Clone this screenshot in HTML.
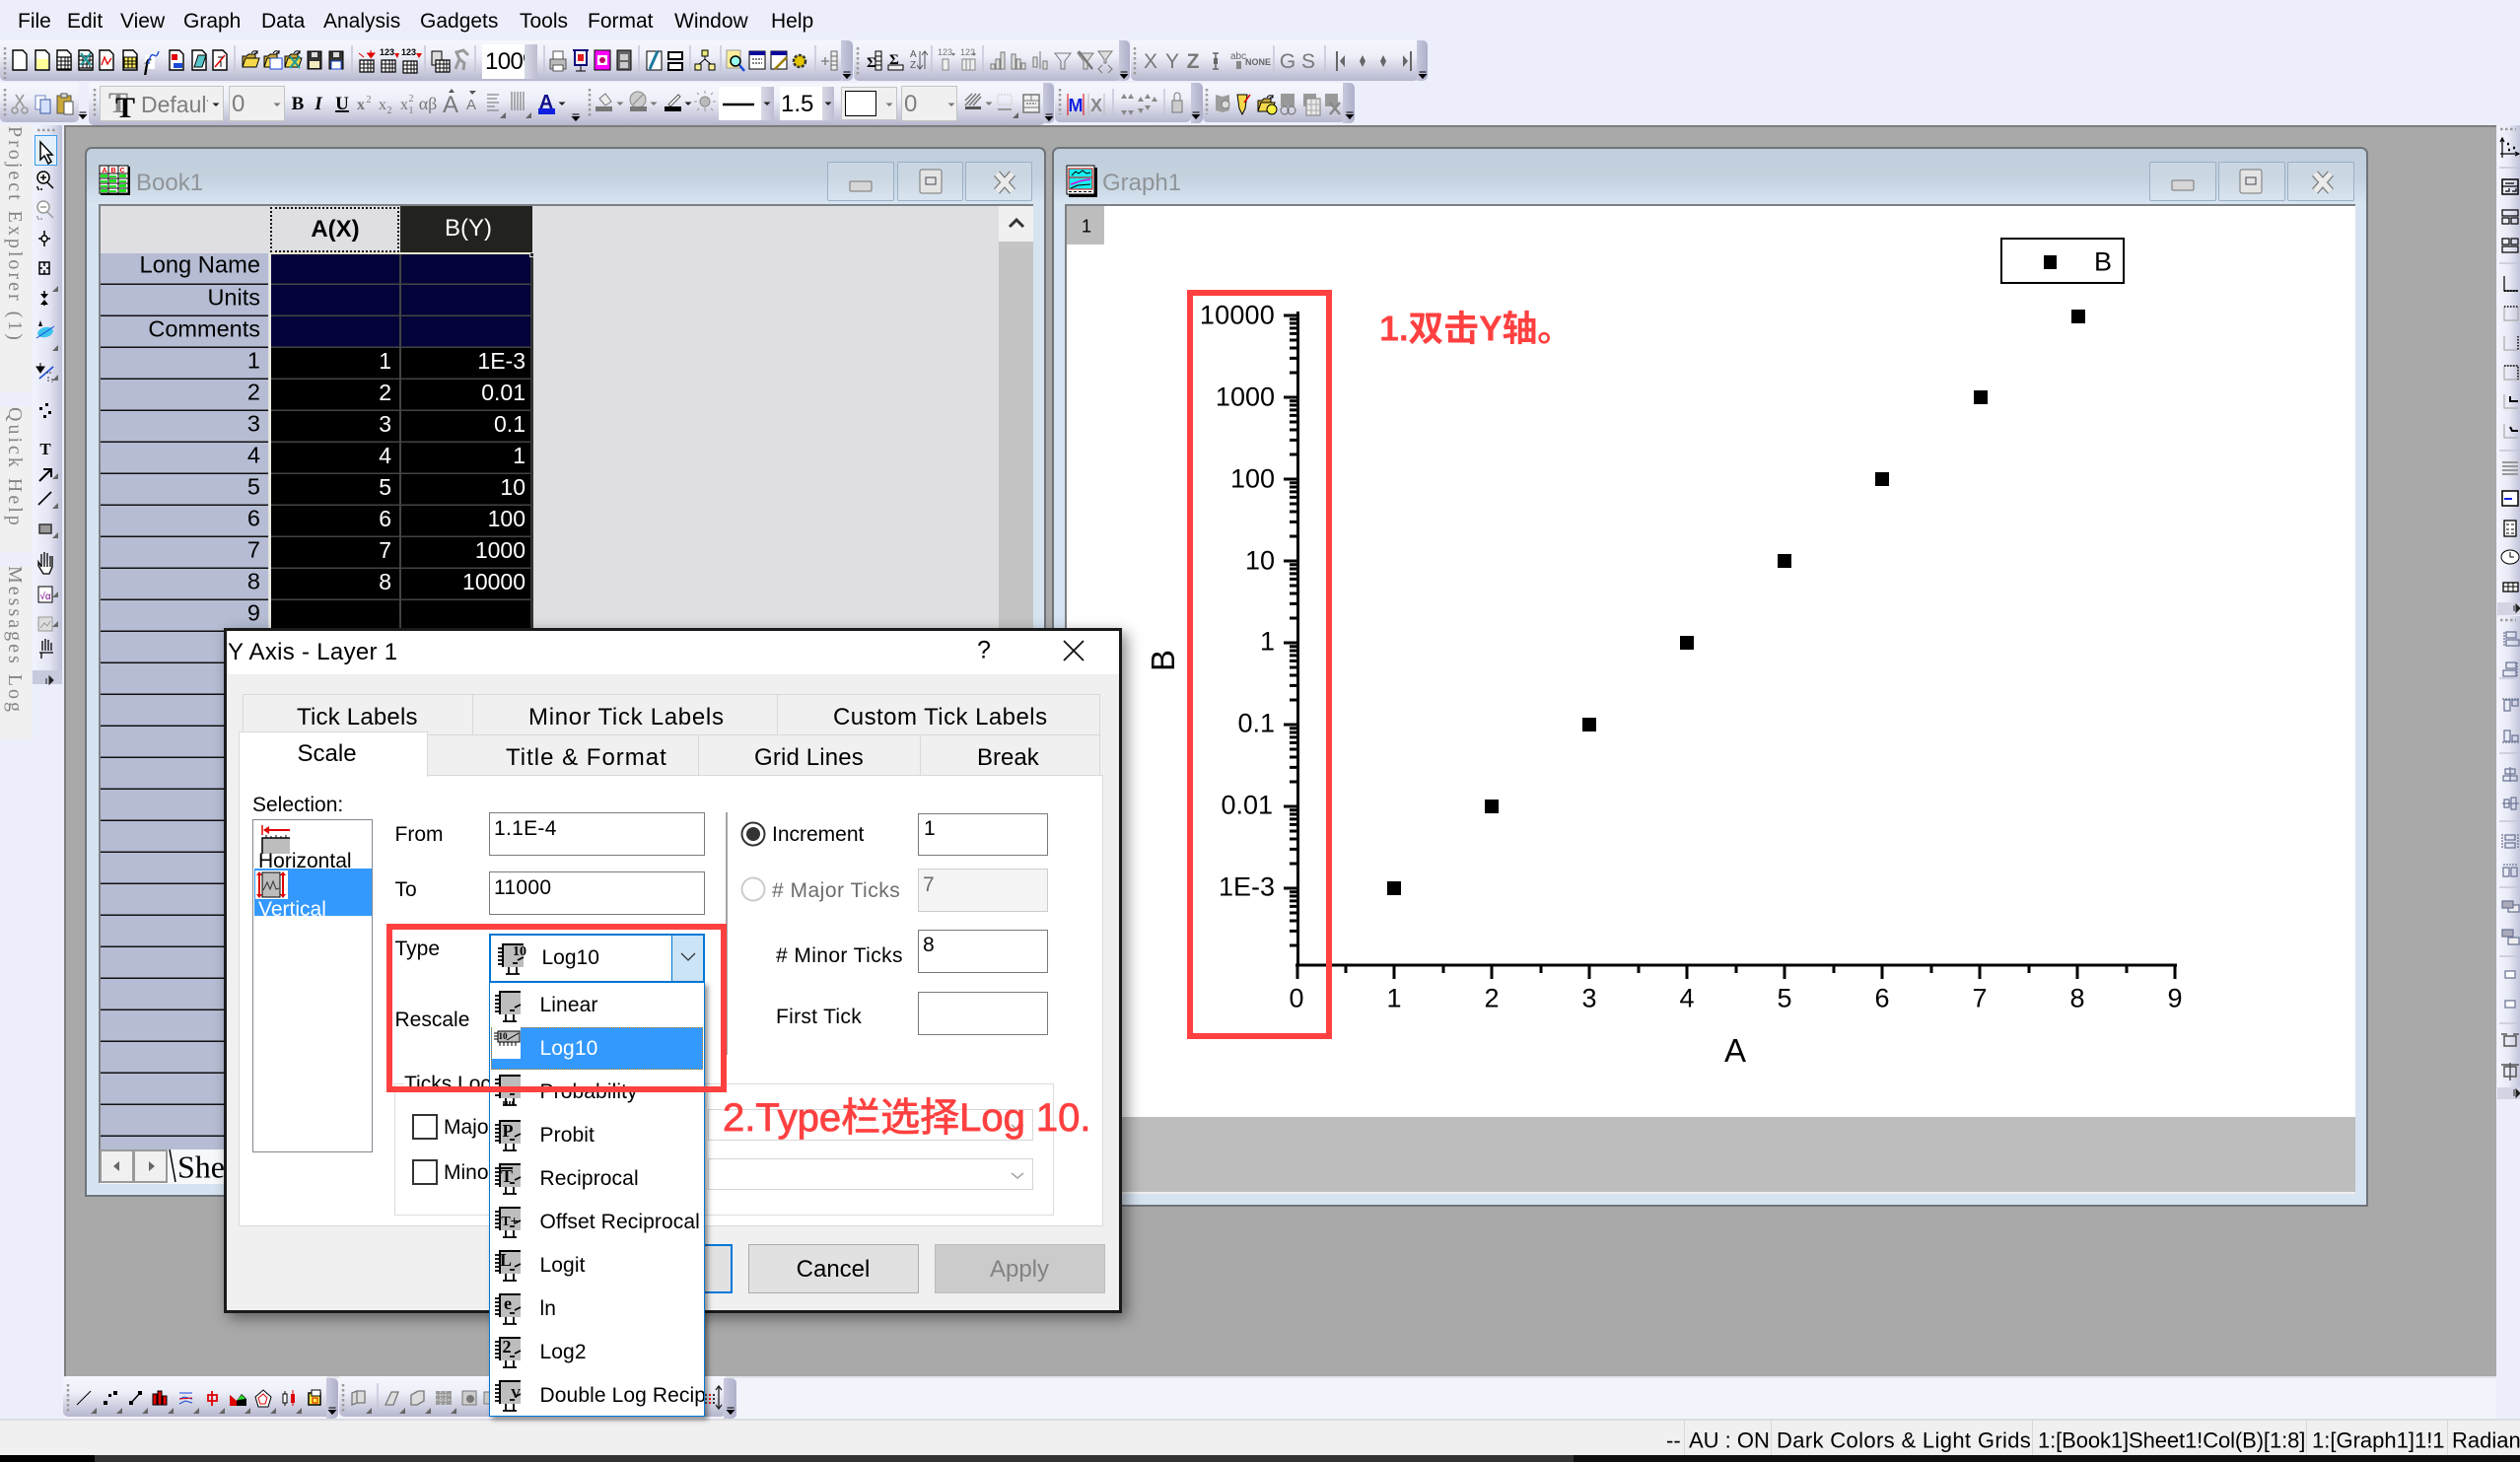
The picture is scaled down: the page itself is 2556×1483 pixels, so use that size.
<!DOCTYPE html>
<html><head><meta charset="utf-8"><title>Y Axis - Layer 1</title>
<style>
html,body{margin:0;padding:0;background:#eceffb}
body{position:relative;width:2556px;height:1483px;overflow:hidden;font-family:"Liberation Sans","Noto Sans CJK SC",sans-serif;color:#000}
div,span{box-sizing:border-box}
.a{position:absolute}
.t{position:absolute;white-space:nowrap;transform:translateY(-50%);line-height:1.15}
.r{position:absolute;white-space:nowrap;transform:translate(-100%,-50%);line-height:1.15}
.c{position:absolute;white-space:nowrap;transform:translate(-50%,-50%);line-height:1.15}
.tb{position:absolute;background:linear-gradient(#f6f7fd 0,#eef0f9 38%,#b6b7ce 100%);border-radius:0 0 5px 5px}
.end{position:absolute;background:linear-gradient(90deg,#c8c9dd,#aeafca);border-radius:0 5px 5px 0}
.win{position:absolute;background:linear-gradient(#c1cfdd 0,#c4d2df 30px,#d8e5f2 58px,#d6e3f1 58px);border:2px solid #6f7479;border-bottom-width:2px;border-radius:7px 7px 0 0}
.wb{position:absolute;top:164px;height:40px;border:1.5px solid #9db0c6;border-radius:2px;background:rgba(255,255,255,.12)}
.tab{position:absolute;background:#f0f0f0;border:1.5px solid #d9d9d9}
.inp{position:absolute;background:#fff;border:1.5px solid #7a7a7a}
.d{font-size:21px}
.it{position:absolute;left:50.500px;font-size:21px;white-space:nowrap;transform:translateY(-50%);letter-spacing:.1px;line-height:1.15}
.vt{position:absolute;left:3px;font:20px 'Liberation Serif',serif;letter-spacing:3px;color:#858585;writing-mode:vertical-rl;white-space:nowrap}
</style></head>
<body>

<!-- chrome backgrounds -->
<div class="a" style="left:0;top:0;width:2556px;height:41px;background:#eceffb"></div>
<div class="t" style="left:18px;top:22px;font-size:21px">File</div>
<div class="t" style="left:68px;top:22px;font-size:21px">Edit</div>
<div class="t" style="left:122px;top:22px;font-size:21px">View</div>
<div class="t" style="left:186px;top:22px;font-size:21px">Graph</div>
<div class="t" style="left:265px;top:22px;font-size:21px">Data</div>
<div class="t" style="left:328px;top:22px;font-size:21px">Analysis</div>
<div class="t" style="left:426px;top:22px;font-size:21px">Gadgets</div>
<div class="t" style="left:527px;top:22px;font-size:21px">Tools</div>
<div class="t" style="left:596px;top:22px;font-size:21px">Format</div>
<div class="t" style="left:684px;top:22px;font-size:21px">Window</div>
<div class="t" style="left:782px;top:22px;font-size:21px">Help</div>

<!-- toolbars row 1 -->
<div class="tb" style="left:0;top:41px;width:856px;height:41px"></div><div class="end" style="left:853px;top:41px;width:12px;height:41px"></div>
<div class="tb" style="left:866px;top:41px;width:272px;height:41px"></div><div class="end" style="left:1135px;top:41px;width:11px;height:41px"></div>
<div class="tb" style="left:1147px;top:41px;width:292px;height:41px"></div><div class="end" style="left:1437px;top:41px;width:11px;height:41px"></div>
<!-- toolbars row 2 -->
<div class="tb" style="left:0;top:84px;width:80px;height:40px"></div>
<div class="tb" style="left:90px;top:84px;width:970px;height:43px"></div>
<div class="end" style="left:1058px;top:84px;width:11px;height:41px"></div>
<div class="tb" style="left:1070px;top:84px;width:138px;height:40px"></div><div class="end" style="left:1208px;top:84px;width:12px;height:41px"></div>
<div class="tb" style="left:1220px;top:84px;width:144px;height:40px"></div><div class="end" style="left:1362px;top:84px;width:12px;height:41px"></div>

<!-- combos -->
<div class="a" style="left:489px;top:45px;width:56px;height:35px;background:#fff;overflow:hidden"><div class="t" style="left:3px;top:18px;font-size:24px;letter-spacing:-.6px">100%</div><div class="a" style="left:43px;top:0;width:13px;height:35px;background:linear-gradient(90deg,#d8d9e6,#bcbdd2)"></div></div>
<div class="a" style="left:101px;top:87px;width:126px;height:36px;background:#f0f0f0;border:1.5px solid #c4c4c4"></div>
<div class="a" style="left:138px;top:90px;width:73px;height:30px;overflow:hidden"><div class="t" style="left:5px;top:16px;font-size:23px;color:#7e7e7e">Default</div></div>
<div class="a" style="left:232px;top:87px;width:57px;height:36px;background:#f0f0f0;border:1.5px solid #c4c4c4"></div>
<div class="t" style="left:235px;top:106px;font-size:24px;color:#7e7e7e">0</div>
<div class="a" style="left:729px;top:88px;width:56px;height:34px;background:#fff"><div class="a" style="left:43px;top:0;width:13px;height:34px;background:linear-gradient(90deg,#d8d9e6,#bcbdd2)"></div></div>
<div class="a" style="left:791px;top:88px;width:55px;height:34px;background:#fff"><div class="a" style="left:43px;top:0;width:12px;height:34px;background:linear-gradient(90deg,#d8d9e6,#bcbdd2)"></div></div>
<div class="t" style="left:792px;top:106px;font-size:24px">1.5</div>
<div class="a" style="left:853px;top:88px;width:57px;height:34px;background:#f0f0f0;border:1.5px solid #c4c4c4"></div>
<div class="a" style="left:857px;top:92px;width:32px;height:26px;background:#fff;border:1.5px solid #000"></div>
<div class="a" style="left:914px;top:87px;width:57px;height:36px;background:#f0f0f0;border:1.5px solid #c4c4c4"></div>
<div class="t" style="left:917px;top:106px;font-size:24px;color:#7e7e7e">0</div>

<!-- left panel -->
<div class="a" style="left:0;top:127px;width:32px;height:271px;background:#f0f0f0"></div>
<div class="a" style="left:0;top:413px;width:32px;height:147px;background:#f0f0f0"></div>
<div class="a" style="left:0;top:575px;width:32px;height:175px;background:#f0f0f0"></div>
<div class="vt" style="top:128px">Project Explorer (1)</div>
<div class="vt" style="top:413px">Quick Help</div>
<div class="vt" style="top:574px">Messages Log</div>
<div class="a" style="left:33px;top:127px;width:30px;height:565px;background:linear-gradient(90deg,#f1f3fc,#e4e6f4 55%,#bfc1d8)"></div>
<div class="a" style="left:33px;top:680px;width:30px;height:14px;background:#c7c9dc"></div>
<div class="a" style="left:35px;top:137px;width:23px;height:31px;background:#e3f0fb;border:1.5px solid #3c9fe8"></div>

<!-- MDI area -->
<div class="a" style="left:65px;top:127px;width:2467px;height:1269px;background:#a9a9a9;border-left:2px solid #7d7d7d;border-top:2px solid #7d7d7d"></div>

<!-- right toolbar -->
<div class="a" style="left:2533px;top:127px;width:23px;height:484px;background:linear-gradient(90deg,#f4f5fd,#e8eaf6 50%,#c3c5da)"></div>
<div class="a" style="left:2533px;top:611px;width:23px;height:13px;background:#d3d4e4"></div>
<div class="a" style="left:2533px;top:625px;width:23px;height:478px;background:linear-gradient(90deg,#f4f5fd,#e8eaf6 50%,#c3c5da)"></div>
<div class="a" style="left:2533px;top:1103px;width:23px;height:12px;background:#d3d4e4"></div>

<!-- bottom bars -->
<div class="a" style="left:65px;top:1396px;width:2467px;height:44px;background:#f2f4fc;border-top:2px solid #e2e3e8"></div>
<div class="a" style="left:2532px;top:1115px;width:24px;height:325px;background:#eceffb"></div>
<div class="a" style="left:0;top:1439px;width:2556px;height:37px;background:#f0f0f0;border-top:2px solid #dcdce2"></div>
<div class="a" style="left:0;top:1476px;width:96px;height:7px;background:#000"></div>
<div class="a" style="left:96px;top:1476px;width:1500px;height:7px;background:#333"></div>
<div class="a" style="left:1596px;top:1476px;width:960px;height:7px;background:#0f0f0f"></div>
<div class="t" style="left:1690px;top:1461px;font-size:22px">--</div>
<div class="t" style="left:1713px;top:1461px;font-size:22px">AU : ON</div>
<div class="t" style="left:1802px;top:1461px;font-size:22px;letter-spacing:.35px">Dark Colors &amp; Light Grids</div>
<div class="t" style="left:2067px;top:1461px;font-size:22px;letter-spacing:-.1px">1:[Book1]Sheet1!Col(B)[1:8]</div>
<div class="t" style="left:2345px;top:1461px;font-size:22px">1:[Graph1]1!1</div>
<div class="t" style="left:2487px;top:1461px;font-size:22px">Radians</div>
<div class="a" style="left:1708px;top:1441px;width:1px;height:35px;background:#d8d8d8"></div>
<div class="a" style="left:1796px;top:1441px;width:1px;height:35px;background:#d8d8d8"></div>
<div class="a" style="left:2061px;top:1441px;width:1px;height:35px;background:#d8d8d8"></div>
<div class="a" style="left:2339px;top:1441px;width:1px;height:35px;background:#d8d8d8"></div>
<div class="a" style="left:2482px;top:1441px;width:1px;height:35px;background:#d8d8d8"></div>
<div class="tb" style="left:64px;top:1396px;width:268px;height:41px;border-radius:4px 0 0 5px"></div><div class="end" style="left:331px;top:1398px;width:12px;height:41px"></div>
<div class="tb" style="left:344px;top:1396px;width:392px;height:41px"></div><div class="end" style="left:734px;top:1398px;width:13px;height:41px"></div>

<!-- toolbar icons -->
<svg class="a" style="left:0;top:0" width="2556" height="1483" viewBox="0 0 2556 1483" font-family="Liberation Sans,sans-serif">
<defs>
<path id="d" d="M-7-10H3L7-6V10H-7Z" fill="#fff" stroke="#000" stroke-width="1.4"/>
<g id="gr"><path d="M-7-5H7V7H-7Z" fill="#fff" stroke="#000" stroke-width="1.2"/><path d="M-7-1H7M-7 3H7M-3-5V7M1-5V7M4-5V7" stroke="#000"/></g>
<g id="ch"><path d="M-3.500-3H3.500M-3.500-.5H3.500L0 3.500Z" fill="#000" stroke="#000" stroke-width=".9"/></g>
<path id="dn" d="M-3.500-1.500H3.500L0 2Z" fill="#222"/>
<path id="dg" d="M-3.500-1.500H3.500L0 2Z" fill="#777"/>
<path id="cor" d="M-3 3H3V-3Z" fill="#666"/>
<g id="fo"><path d="M-8 8V-3H-4L-2-5H5V-1" fill="#c9a73a" stroke="#000"/><path d="M-8 8L-5-1H9L6 8Z" fill="#f5d94a" stroke="#000"/><path d="M1-6C3-9 6-9 7-6M7-9V-6H4" fill="none" stroke="#000"/></g>
<g id="fl"><path d="M-7-9H7V9H-7Z" fill="#333" stroke="#000"/><path d="M-3-8H3V-3H-3Z" fill="#ddd"/><path d="M-5 1H5V8H-5Z" fill="#f2ecc0"/></g>
<g id="ga"><path d="M-7-9H7V8H-7Z" fill="#e8e8e8" stroke="#8d8d8d" stroke-width="1.2"/><path d="M-7-3H7M-7 3H7M-2-9V8M3-9V8" stroke="#aaa"/></g>
<g id="bar"><path d="M-8 8H-4V3H-8ZM-3 8H1V-1H-3ZM2 8H6V-6H2Z" fill="#ddd" stroke="#555"/></g>
<g id="dta"><path d="M-7-9L7 0L-7 9Z" fill="none"/></g>
</defs>

<!-- grips -->
<g stroke="#9b9b9b" stroke-width="2.500" stroke-dasharray="2.500 2.500">
<path d="M5 48V80M5 90V118M96 90V118M598 90V118M870 48V76M1151 48V76M1075 90V116M1224 90V116M69 1404V1432M348 1404V1432M38 132H58M2536 131H2552M2536 629H2552"/>
</g>
<!-- separators -->
<path d="M238 46V78M357 46V78M431 46V78M482 46V78M552 46V78M648 46V78M700 46V78M731 46V78M827 46V78M945 46V78M997 46V78M1292 46V78M1344 46V78M1129 90V120M1181 90V120M383 1403V1433M2535 170H2555M2535 267H2555M2535 457H2555M2535 688H2555M2535 764H2555M2535 833H2555M2535 900H2555M2535 970H2555M2535 1038H2555" stroke="#c5c6d8" stroke-width="1.500"/>

<!-- chevrons -->
<use href="#ch" x="859" y="76"/><use href="#ch" x="1140" y="76"/><use href="#ch" x="1443" y="76"/>
<use href="#ch" x="84" y="117"/><use href="#ch" x="584" y="119"/><use href="#ch" x="1064" y="119"/><use href="#ch" x="1213" y="117"/><use href="#ch" x="1369" y="117"/><use href="#ch" x="337" y="1431"/><use href="#ch" x="741" y="1431"/>
<path d="M47 688V694M50 686L54 690L50 694Z" fill="#222" stroke="#222"/>
<path d="M2550 614V620M2552 613L2556 617L2552 621Z" fill="#222" stroke="#222"/><path d="M2550 1105V1112M2552 1105L2556 1109L2552 1113Z" fill="#222" stroke="#222"/>

<!-- row 1 group 1 -->
<use href="#d" x="20" y="61"/>
<use href="#d" x="43" y="61"/><rect x="37" y="60" width="12" height="10" fill="#ffff99"/>
<use href="#d" x="65" y="61"/><use href="#gr" x="65" y="63"/>
<use href="#d" x="87" y="61"/><use href="#gr" x="87" y="62"/><path d="M82 54L92 66M92 54L82 66" stroke="#1c9a9a" stroke-width="2"/>
<use href="#d" x="108" y="61"/><path d="M103 66L106 58L109 65L113 59" stroke="#e00000" fill="none" stroke-width="1.300"/>
<use href="#d" x="132" y="61"/><rect x="126" y="58" width="12" height="11" fill="#ffef60" stroke="#000"/><path d="M126 62H138M126 65H138M130 58V69M134 58V69" stroke="#000"/>
<path d="M147 56H157V70H147Z" fill="#fff"/><text x="146" y="72" font-family="Liberation Serif" font-style="italic" font-weight="bold" font-size="18">f</text><path d="M150 65C155 45 157 65 161 52" stroke="#2a53d8" fill="none" stroke-width="1.500"/>
<use href="#d" x="179" y="61"/><rect x="174" y="55" width="6" height="6" fill="#e00000"/><rect x="176" y="64" width="9" height="5" fill="#1a49d8"/>
<use href="#d" x="202" y="61"/><path d="M197 68L201 56H209L205 68Z" fill="#57c4c9" stroke="#000"/>
<use href="#d" x="223" y="61"/><path d="M218 68L228 56" stroke="#e00000" stroke-width="1.500"/><path d="M221 58H226M224 62V68" stroke="#000"/>
<use href="#fo" x="254" y="60"/><use href="#fo" x="276" y="60"/><rect x="274" y="59" width="12" height="11" fill="#fff" stroke="#1a49d8"/>
<use href="#fo" x="297" y="60"/><path d="M294 57L304 69M304 57L294 69" stroke="#1c9a9a" stroke-width="2"/>
<use href="#fl" x="319" y="61"/><use href="#fl" x="341" y="61"/><path d="M336 62H346V70H336Z" fill="#fff" stroke="#1a49d8"/>
<use href="#gr" x="372" y="66"/><path d="M364 54L369 58M376 51V57M372 54H380L376 59" fill="#e00000" stroke="#e00000"/>
<use href="#gr" x="394" y="66"/><text x="385" y="56" font-size="9" font-weight="bold">123</text><path d="M400 54H405L403 59Z" fill="#e00000"/>
<use href="#gr" x="416" y="67"/><text x="407" y="56" font-size="9" font-weight="bold">123</text><path d="M422 54H428L425 59Z" fill="#e00000"/>
<path d="M438 52H448V66H438Z" fill="#ddd" stroke="#000"/><use href="#gr" x="449" y="66"/>
<path d="M462 70L466 60L463 53L470 51L475 56M466 60L471 64L470 71" stroke="#999" stroke-width="3" fill="none"/>
<path d="M558 60H574V70H558Z" fill="#bbb" stroke="#555"/><path d="M561 52H571V60H561ZM561 66H571V72H561Z" fill="#fff" stroke="#555"/>
<path d="M581 51H597M583 52V66H595V52" fill="#fff" stroke="#0a0a7a" stroke-width="2"/><path d="M586 55H592V62H586Z" fill="#e02020"/><path d="M589 66V72M584 72H594" stroke="#000"/>
<rect x="603" y="51" width="16" height="20" fill="#f0f" stroke="#000"/><rect x="606" y="56" width="10" height="10" fill="#fff"/><circle cx="611" cy="61" r="3" fill="#c0006a"/>
<rect x="626" y="51" width="14" height="20" fill="#666" stroke="#000"/><path d="M629 55H637V61H629ZM629 63H637V69H629Z" fill="#ccc"/>
<rect x="656" y="52" width="15" height="19" fill="#fff" stroke="#000"/><path d="M659 70L667 52" stroke="#1c7ba0" stroke-width="3"/>
<path d="M678 53H692V60H678ZM678 64H692V71H678Z" fill="#fff" stroke="#000" stroke-width="2"/>
<path d="M715 53V60M715 60L708 66M715 60L722 66" stroke="#000"/><rect x="712" y="51" width="6" height="6" fill="#e6e67a" stroke="#000"/><rect x="705" y="65" width="6" height="6" fill="#f7f19a" stroke="#000"/><rect x="719" y="65" width="6" height="6" fill="#f7f19a" stroke="#000"/>
<rect x="737" y="51" width="14" height="18" fill="#ffef9a" stroke="#999"/><circle cx="746" cy="62" r="5" fill="#9fe" stroke="#000" stroke-width="1.500"/><path d="M750 66L755 72" stroke="#1a49d8" stroke-width="2.500"/>
<rect x="760" y="52" width="16" height="18" fill="#fff" stroke="#000"/><rect x="760" y="52" width="16" height="4" fill="#0a0a9a"/><path d="M763 60H773M763 64H773" stroke="#000" stroke-dasharray="2 1"/>
<rect x="782" y="52" width="16" height="18" fill="#fff" stroke="#000"/><rect x="782" y="52" width="16" height="4" fill="#0a0a9a"/><path d="M786 70L798 58" stroke="#9a7f00" stroke-width="2.500"/>
<circle cx="811" cy="62" r="6" fill="#e2c400" stroke="#333" stroke-width="2.500" stroke-dasharray="3 1.500"/>
<path d="M833 62H841M837 58V66" stroke="#888" stroke-width="1.600"/><rect x="843" y="52" width="6" height="19" fill="#eee" stroke="#666"/><path d="M843 57H849M843 62H849M843 66H849" stroke="#666"/>

<!-- row 1 group 2 -->
<text x="879" y="68" font-family="Liberation Serif" font-size="15" font-weight="bold">Σ</text><rect x="888" y="52" width="6" height="19" fill="#eee" stroke="#000"/><path d="M888 57H894M888 62H894M888 66H894" stroke="#000"/>
<text x="902" y="65" font-family="Liberation Serif" font-size="15" font-weight="bold">Σ</text><rect x="901" y="66" width="15" height="5" fill="#eee" stroke="#000"/>
<text x="923" y="58" font-size="10" fill="#555">A</text><text x="923" y="69" font-size="10" fill="#555">Z</text><path d="M933 52V70M930 66L933 70L936 66M938 70V52M935 56L938 52L941 56" stroke="#555" fill="none"/>
<text x="951" y="56" font-size="9" fill="#777">123</text><rect x="956" y="60" width="6" height="11" fill="#eee" stroke="#888"/><path d="M965 54H969L967 57Z" fill="#777"/>
<text x="974" y="56" font-size="9" fill="#777">123</text><rect x="976" y="60" width="13" height="11" fill="#eee" stroke="#888"/><path d="M980 60V71M984 60V71" stroke="#888"/><path d="M986 54H990L988 57Z" fill="#777"/>
<g stroke="#777" fill="#ddd"><path d="M1005 70V65H1009V70ZM1010 70V60H1014V70ZM1015 70V53H1019V70Z"/><path d="M1026 70V55H1030V70ZM1031 70V60H1035V70ZM1036 70V64H1040V70Z"/><path d="M1055 52V70M1048 58H1052V68H1048ZM1058 62H1062V70H1058Z"/><path d="M1070 54H1086L1080 62V70H1076V62Z" fill="none"/><path d="M1093 54H1109L1103 62V70H1099V62Z" fill="#ddd"/><path d="M1114 52H1128L1122 60V64H1120V60Z" fill="#ddd"/></g>
<path d="M1094 52L1108 70" stroke="#777" stroke-width="2.500"/><path d="M1124 66L1128 70L1124 74M1118 66L1114 70L1118 74" stroke="#777" fill="none"/>

<!-- row 1 group 3 -->
<g fill="#787878" font-size="21" text-anchor="middle"><text x="1167" y="69">X</text><text x="1189" y="69">Y</text><text x="1210" y="69" font-weight="bold">Z</text><text x="1306" y="69">G</text><text x="1327" y="69">S</text></g>
<path d="M1233 54V70M1230 54H1236M1230 70H1236" stroke="#666" stroke-width="1.500"/><rect x="1231" y="59" width="4" height="6" fill="#666"/>
<text x="1256" y="60" font-size="10" fill="#666" text-anchor="middle">abc</text><rect x="1254" y="62" width="5" height="8" fill="#888"/>
<text x="1276" y="66" font-size="9" font-weight="bold" fill="#666" text-anchor="middle">NONE</text>
<g fill="#666"><path d="M1355 52V72H1357V52ZM1359 62L1364 56V68Z"/><path d="M1379 62L1382 56L1385 62L1382 68Z"/><path d="M1400 62L1403 56L1406 62L1403 68Z"/><path d="M1428 62L1423 56V68ZM1430 52V72H1432V52Z"/></g>

<!-- row 2 icons -->
<g stroke="#999" fill="none" stroke-width="1.600"><path d="M16 96L24 108M24 96L16 108"/><circle cx="15" cy="112" r="3"/><circle cx="25" cy="112" r="3"/></g>
<path d="M36 97H46V111H36Z" fill="#fff" stroke="#6d83c8"/><path d="M41 101H51V115H41Z" fill="#d3e1fa" stroke="#3d5aa8"/>
<path d="M58 97H72V115H58Z" fill="#c9a73a" stroke="#555"/><path d="M62 95H68V99H62Z" fill="#ddd" stroke="#555"/><path d="M65 103H74V116H65Z" fill="#fff" stroke="#555"/>
<text x="110" y="114" font-family="Liberation Serif" font-weight="bold" font-size="30" fill="#888">T</text><text x="117" y="119" font-family="Liberation Serif" font-weight="bold" font-size="30">T</text>
<use href="#dn" x="219" y="106"/><use href="#dg" x="281" y="106"/>
<g font-family="Liberation Serif" font-size="19" text-anchor="middle">
<text x="302" y="111" font-weight="bold">B</text><text x="323" y="111" font-weight="bold" font-style="italic">I</text><text x="347" y="111" font-weight="bold" text-decoration="underline">U</text>
<g fill="#777" font-size="16"><text x="366" y="111" font-weight="bold">x</text><text x="374" y="104" font-size="10">2</text><text x="388" y="111">x</text><text x="395" y="115" font-size="10">2</text><text x="410" y="111">x</text><text x="417" y="103" font-size="10">2</text><text x="417" y="115" font-size="10">1</text><text x="434" y="111" font-size="18">αβ</text><text x="457" y="114" font-size="24" font-family="Liberation Sans">A</text><text x="478" y="111" font-size="15" font-family="Liberation Sans">A</text></g></g>
<path d="M455 94L458 90L461 94M476 92H483L479 96Z" fill="#555"/>
<path d="M494 96H506M494 100H504M494 104H506M494 108H502M494 112H506M519 93V112M522 93V112M525 93V112M528 93V112M531 93V112" stroke="#888" stroke-width="1.300"/>
<use href="#cor" x="510" y="117"/><use href="#cor" x="536" y="117"/>
<text x="554" y="110" font-size="20" font-weight="bold" fill="#10108a" text-anchor="middle">A</text><rect x="546" y="110" width="17" height="6" fill="#1020e0"/><use href="#dn" x="570" y="105"/>
<path d="M608 100L614 95L620 103L614 107Z" fill="#eee" stroke="#777"/><rect x="604" y="108" width="17" height="5" fill="#777"/><use href="#dg" x="629" y="105"/>
<circle cx="647" cy="101" r="8" fill="#ccc" stroke="#888"/><path d="M642 106L652 96" stroke="#888"/><rect x="639" y="108" width="17" height="5" fill="#777"/><use href="#dg" x="663" y="105"/>
<path d="M678 106L688 96L690 98L680 108Z" fill="#fff" stroke="#555"/><rect x="674" y="108" width="17" height="5" fill="#000"/><use href="#dn" x="698" y="105"/>
<circle cx="715" cy="103" r="5" fill="#bbb" stroke="#888"/><path d="M707 103H704M726 103H723M709 96L707 94M721 96L723 94M709 110L707 112M721 110L723 112M715 95V92M715 113V109" stroke="#999"/>
<path d="M733 106H765" stroke="#000" stroke-width="2.500"/><use href="#dn" x="778" y="105"/><use href="#dn" x="840" y="105"/><use href="#dg" x="902" y="106"/><use href="#dg" x="965" y="106"/>
<path d="M979 108H995V111H979Z" fill="#555"/><path d="M979 107L990 95M983 107L994 95M987 107L995 98M979 102L986 95" stroke="#777" stroke-width="1.500"/><use href="#dg" x="1003" y="105"/>
<path d="M1012 96H1026V106H1012Z" fill="none" stroke="#ccc" stroke-dasharray="2 1"/><path d="M1012 111H1026" stroke="#999" stroke-width="2"/><use href="#cor" x="1030" y="117"/>
<path d="M1038 96H1054V114H1038Z" fill="#f0f0f0" stroke="#777" stroke-width="1.500"/><path d="M1038 102H1054M1038 109H1054M1046 96V102" stroke="#777"/><path d="M1041 105H1051" stroke="#444" stroke-dasharray="2 1"/>
<path d="M1083 95V117M1099 95V117" stroke="#e00000"/><text x="1091" y="113" font-size="18" font-weight="bold" fill="#1020e0" text-anchor="middle">M</text>
<path d="M1104 95V117M1120 95V117" stroke="#bbb"/><text x="1112" y="113" font-size="18" font-weight="bold" fill="#888" text-anchor="middle">X</text>
<g fill="#888"><path d="M1143 95L1146 100H1140ZM1143 117L1146 112H1140ZM1150 95L1153 100H1147ZM1150 117L1153 112H1147Z" transform="translate(-3 0)"/><path d="M1157 98L1160 103H1154ZM1157 115L1160 110H1154ZM1164 95L1167 100H1161ZM1164 112L1167 107H1161ZM1171 98L1174 103H1168Z"/><path d="M1189 102H1199V114H1189Z" fill="#ccc" stroke="#777"/><path d="M1191 102V97A3 3 0 0 1 1197 97V102" fill="none" stroke="#777"/></g>
<path d="M1233 96L1240 98V114L1233 112ZM1240 98L1247 96V112L1240 114Z" fill="#9d9d9d"/><circle cx="1243" cy="106" r="4" fill="#ddd" stroke="#777"/>
<path d="M1255 96H1265L1263 110L1260 116L1257 110Z" fill="#f5d94a" stroke="#000"/><path d="M1268 96L1262 104" stroke="#e00000" stroke-width="1.500"/>
<use href="#fo" x="1284" y="105"/><circle cx="1290" cy="111" r="5" fill="#f5ef40" stroke="#000"/>
<path d="M1299 95H1313V108H1299Z" fill="#999"/><circle cx="1303" cy="112" r="4" fill="none" stroke="#666"/><circle cx="1310" cy="112" r="4" fill="none" stroke="#666"/>
<path d="M1322 95H1335V108H1322Z" fill="#999"/><use href="#ga" x="1332" y="109" transform="translate(0 0)"/>
<path d="M1344 95H1357V108H1344Z" fill="#999"/><path d="M1349 104L1359 116M1359 104L1349 116" stroke="#888" stroke-width="2.500"/>

<!-- left toolbar icons -->
<g fill="none" stroke="#000" stroke-width="1.500">
<path d="M41 144V162L45 158L49 166L52 164L48 157H53Z" fill="#fff"/>
<circle cx="44" cy="180" r="6" fill="#fff"/><path d="M48 185L54 191M41 180H47M44 177V183"/><path d="M38 189V192H44" stroke-dasharray="2 1"/>
<g stroke="#999"><circle cx="44" cy="210" r="6" fill="#fff"/><path d="M48 215L54 221M41 210H47"/><path d="M38 219V222H44" stroke-dasharray="2 1"/></g>
<path d="M45 234V250M39 242H51"/><circle cx="45" cy="242" r="3" fill="#fff"/>
<path d="M40 266H50V278H40ZM45 266V270M45 274V278M40 272H43M47 272H50"/>
<path d="M45 295V300M45 305V310"/></g>
<path d="M41 298H49L45 303ZM41 309H49L45 304Z"/>
<path d="M41 325L43 331H39ZM41 325V325" fill="#000"/><ellipse cx="46" cy="337" rx="8" ry="5" fill="#3cc4ef" transform="rotate(-15 46 337)"/><path d="M37 343L55 331" stroke="#1a49d8"/>
<path d="M41 368V378M37 372H45L41 378ZM40 384L54 372" stroke="#000"/><path d="M40 384L54 372" stroke="#1a49d8" stroke-width="1.500"/><path d="M47 378H53M49 382V388M53 384V388" stroke="#333" stroke-dasharray="2 1"/>
<g><rect x="40" y="413" width="3" height="3"/><rect x="46" y="409" width="3" height="3"/><rect x="49" y="417" width="3" height="3"/><rect x="44" y="421" width="3" height="3"/></g>
<text x="46" y="461" font-family="Liberation Serif" font-weight="bold" font-size="17" text-anchor="middle">T</text>
<path d="M40 488L52 476M44 476H52V484" fill="none" stroke="#000" stroke-width="2"/>
<path d="M39 512L52 499" stroke="#000" stroke-width="1.600"/>
<rect x="40" y="532" width="12" height="9" fill="#999" stroke="#333" stroke-width="1.500"/>
<path d="M42 575V562M45 575V560M48 575V561M51 575V564M42 575L39 570V574L44 582H50L53 575V564" fill="#fff" stroke="#000" stroke-width="1.300"/>
<rect x="39" y="595" width="14" height="16" fill="#fff" stroke="#000"/><text x="46" y="608" font-size="10" fill="#7a0090" text-anchor="middle">√α</text>
<rect x="39" y="626" width="14" height="14" fill="#ddd" stroke="#999"/><path d="M41 637L45 632L48 635L51 630" stroke="#999" fill="none"/>
<path d="M43 660V650M46 660V648M49 660V649M52 660V652M40 662H54M42 662V668" fill="none" stroke="#000" stroke-width="1.300"/>
<g transform="translate(56 0)"><use href="#cor" y="293" /><use href="#cor" y="353"/><use href="#cor" y="383"/><use href="#cor" y="483"/><use href="#cor" y="513"/><use href="#cor" y="543"/><use href="#cor" y="603"/><use href="#cor" y="633"/></g>

<!-- right toolbar icons -->
<g fill="none" stroke="#000" stroke-width="1.200">
<path d="M2538 140V160M2536 156H2555M2536 144L2538 140L2540 144M2551 154L2555 156L2551 158"/><path d="M2543 146H2545M2549 150H2551M2544 152H2546" stroke-width="2.500"/>
<rect x="2538" y="182" width="16" height="15" stroke-width="1.500"/><path d="M2538 189H2554M2541 186H2550M2541 194H2545V191M2548 194H2552V191"/>
<rect x="2538" y="213" width="16" height="6"/><rect x="2538" y="221" width="7" height="6"/><rect x="2547" y="221" width="7" height="6"/>
<rect x="2538" y="242" width="7" height="6"/><rect x="2547" y="242" width="7" height="6"/><rect x="2538" y="250" width="16" height="6"/>
<path d="M2540 280V295H2554"/><path d="M2540 295H2554" stroke-dasharray="1.500 1.500" stroke-width="2"/>
<g stroke="#aaa"><path d="M2540 311V325H2554V311"/><path d="M2540 311H2554" stroke="#333" stroke-dasharray="1.500 1.500" stroke-width="2"/><path d="M2540 341V355H2554"/><path d="M2554 341V355" stroke="#333" stroke-dasharray="1.500 1.500" stroke-width="2"/><path d="M2540 371V385H2554V371H2540"/><path d="M2540 371H2554V385" stroke="#333" stroke-dasharray="1.500 1.500" stroke-width="2"/><path d="M2540 400V414H2554M2540 430V444H2554"/></g>
<path d="M2546 402V407H2554" stroke-width="2"/><path d="M2546 433L2548 437H2554" stroke-width="2"/>
</g>
<path d="M2538 469H2554M2538 473H2554M2538 477H2554M2538 481H2554" stroke="#999" stroke-width="2"/>
<rect x="2538" y="498" width="16" height="15" fill="#fff" stroke="#000" stroke-width="1.500"/><path d="M2540 506H2548" stroke="#1020e0" stroke-width="2"/>
<rect x="2540" y="528" width="12" height="16" fill="#fff" stroke="#000" stroke-width="1.300"/><path d="M2542 532H2545M2542 537H2545M2542 541H2545M2547 532H2550M2547 537H2550M2547 541H2550" stroke="#000"/>
<ellipse cx="2546" cy="565" rx="9" ry="7" fill="#fff" stroke="#000"/><path d="M2546 560V565H2550" stroke="#000" fill="none"/>
<rect x="2539" y="591" width="15" height="9" fill="#fff" stroke="#000" stroke-width="1.300"/><path d="M2539 595H2554M2544 591V600M2549 591V600" stroke="#000"/>
<g fill="none" stroke="#6f7896" stroke-width="1.300">
<path d="M2540 641V655" stroke-dasharray="2 1"/><rect x="2542" y="641" width="10" height="6"/><rect x="2542" y="649" width="13" height="6"/>
<path d="M2553 672V686" stroke-dasharray="2 1"/><rect x="2542" y="672" width="10" height="6"/><rect x="2539" y="680" width="13" height="6"/>
<path d="M2538 709H2555" stroke-dasharray="2 1"/><rect x="2540" y="710" width="6" height="11"/><rect x="2548" y="710" width="6" height="6"/>
<path d="M2538 753H2555" stroke-dasharray="2 1"/><rect x="2540" y="741" width="6" height="11"/><rect x="2548" y="746" width="6" height="6"/>
<path d="M2546 778V793"/><rect x="2541" y="780" width="10" height="5"/><rect x="2539" y="787" width="14" height="5"/>
<path d="M2538 815H2555"/><rect x="2540" y="811" width="5" height="8"/><rect x="2547" y="809" width="5" height="12"/>
<rect x="2541" y="847" width="10" height="5"/><rect x="2541" y="855" width="10" height="5"/><path d="M2538 846V861M2554 846V861" stroke-dasharray="2 1"/>
<rect x="2539" y="880" width="6" height="9"/><rect x="2547" y="880" width="6" height="9"/><path d="M2539 877H2553" stroke-dasharray="2 1"/>
</g>
<g stroke="#6f7896" stroke-width="1.300" fill="#eee"><rect x="2544" y="918" width="11" height="7"/><rect x="2538" y="914" width="11" height="7" fill="#aab"/><rect x="2538" y="943" width="11" height="7" fill="#aab"/><rect x="2544" y="951" width="11" height="7"/><rect x="2541" y="985" width="10" height="7" fill="#fff"/><rect x="2541" y="1015" width="10" height="7" fill="#fff"/></g>
<g stroke="#555" stroke-width="1.500" fill="none"><rect x="2540" y="1051" width="12" height="10"/><path d="M2537 1049H2543M2549 1049H2555"/><rect x="2540" y="1082" width="12" height="10"/><path d="M2546 1078V1096M2537 1080H2555"/></g>

<!-- bottom toolbar icons -->
<path d="M78 1425L92 1411" stroke="#000" stroke-width="1"/>
<g fill="#000"><rect x="105" y="1421" width="4" height="4"/><rect x="110" y="1414" width="3" height="3"/><rect x="115" y="1411" width="4" height="4"/><rect x="131" y="1421" width="4" height="4"/><rect x="140" y="1411" width="4" height="4"/></g><path d="M133 1423L142 1413" stroke="#000" stroke-width="1.500"/>
<path d="M155 1425V1414H159V1425ZM160 1425V1411H164V1425ZM165 1425V1416H169V1425Z" fill="#e00000" stroke="#000"/>
<path d="M182 1413H195M182 1419L187 1417L195 1419M182 1424L188 1421L195 1423" fill="none" stroke="#1a49d8"/><path d="M182 1419L195 1418" stroke="#e00000"/>
<path d="M215 1411V1426M211 1415H220V1421H211Z" fill="none" stroke="#e00000" stroke-width="1.800"/>
<path d="M233 1426V1415L240 1421L245 1414L250 1419V1426Z" fill="#000"/><path d="M233 1426V1415L240 1421V1426Z" fill="#e00000"/><path d="M241 1420L245 1415L249 1419Z" fill="#2ee02e"/>
<path d="M267 1410L275 1417L272 1427H262L259 1417Z" fill="#fff" stroke="#000"/><path d="M267 1414L271 1418L269 1424H264L262 1418Z" fill="none" stroke="#e00000"/>
<path d="M289 1411V1426" stroke="#000"/><rect x="287" y="1414" width="4" height="9" fill="#fff" stroke="#000"/><rect x="295" y="1414" width="4" height="9" fill="#e00000"/><path d="M297 1410V1426" stroke="#e00000"/>
<rect x="313" y="1413" width="12" height="12" fill="#f5ef40" stroke="#000" stroke-width="1.500"/><rect x="316" y="1410" width="9" height="6" fill="#fff" stroke="#000"/><rect x="317" y="1418" width="5" height="5" fill="none" stroke="#e00000"/>
<g fill="#ddd" stroke="#777" stroke-width="1.300"><path d="M357 1425V1413L362 1411V1423ZM362 1423V1411H370V1423Z"/><path d="M391 1425L397 1412H404L399 1425Z"/><path d="M417 1425V1415L424 1411H430V1421L423 1425Z"/></g>
<rect x="442" y="1411" width="16" height="14" fill="#999"/><path d="M442 1415H458M442 1420H458M447 1411V1425M452 1411V1425" stroke="#ddd" stroke-dasharray="2 1"/>
<rect x="469" y="1411" width="14" height="14" fill="#ccc" stroke="#777"/><circle cx="477" cy="1419" r="4" fill="#777"/><rect x="491" y="1412" width="8" height="12" fill="#ccc" stroke="#777"/>
<g transform="translate(0 1332)"><use href="#cor" x="95" y="99"/><use href="#cor" x="121" y="99"/><use href="#cor" x="147" y="99"/><use href="#cor" x="173" y="99"/><use href="#cor" x="199" y="99"/><use href="#cor" x="225" y="99"/><use href="#cor" x="251" y="99"/><use href="#cor" x="277" y="99"/><use href="#cor" x="303" y="99"/><use href="#cor" x="374" y="99"/><use href="#cor" x="408" y="99"/><use href="#cor" x="434" y="99"/><use href="#cor" x="460" y="99"/></g>
</svg>

<!-- BOOK1 -->
<div class="win" style="left:86px;top:149px;width:975px;height:1065px"></div>
<svg class="a" style="left:100px;top:167px" width="34" height="32"><rect x="2" y="2" width="30" height="29" fill="#000"/><rect x="1" y="1" width="29" height="28" fill="#fff" stroke="#000"/><path d="M2 2H29V9H2Z" fill="#fff"/><g font-size="7" font-weight="bold" fill="#e00000" text-anchor="middle"><text x="6" y="8">A</text><text x="15" y="8">B</text><text x="24" y="8">C</text></g><path d="M1 9H30M1 14H30M1 19H30M1 24H30M10 1V29M20 1V29" stroke="#000"/><g fill="#22e022"><rect x="2" y="10" width="7" height="3"/><rect x="11" y="11" width="7" height="2"/><rect x="21" y="10" width="7" height="3"/><rect x="2" y="16" width="7" height="2"/><rect x="11" y="15" width="7" height="3"/><rect x="21" y="16" width="7" height="2"/><rect x="2" y="21" width="7" height="2"/><rect x="11" y="21" width="7" height="2"/><rect x="21" y="20" width="7" height="3"/><rect x="2" y="25" width="7" height="3"/><rect x="11" y="26" width="7" height="2"/><rect x="21" y="25" width="7" height="3"/></g></svg>
<div class="t" style="left:138px;top:186px;font-size:24px;color:#909497">Book1</div>
<div class="wb" style="left:839px;width:68px"></div><div class="wb" style="left:910px;width:67px"></div><div class="wb" style="left:979px;width:68px"></div>
<svg class="a" style="left:839px;top:164px" width="208" height="40"><rect x="23" y="20" width="22" height="10" rx="1" fill="#d6d6d6" stroke="#777"/><rect x="94" y="8" width="22" height="24" rx="2" fill="#e4e4e4" stroke="#777"/><rect x="100" y="16" width="10" height="7" fill="none" stroke="#445"/><path d="M172 12L188 30M188 12L172 30" stroke="#777" stroke-width="8"/><path d="M172 12L188 30M188 12L172 30" stroke="#ebebeb" stroke-width="5.500"/></svg>

<div class="a" style="left:100px;top:207px;width:948px;height:993px;background:#dfdfe3;border-top:2px solid #7d8185;border-left:2px solid #7d8185"></div>
<div class="a" style="left:1013px;top:209px;width:35px;height:991px;background:#c4c4c4"></div>
<div class="a" style="left:1013px;top:209px;width:35px;height:36px;background:#f0f0f0"></div>
<svg class="a" style="left:1013px;top:209px" width="35" height="36"><path d="M11 21L18 14L25 21" fill="none" stroke="#333" stroke-width="3"/></svg>
<div class="a" style="left:102px;top:257px;width:170px;height:909px;background:repeating-linear-gradient(#b5bcd3 0,#b5bcd3 30.500px,#111 30.500px,#111 32px)"></div>
<div class="a" style="left:274px;top:210px;width:131px;height:46px;background:#dfdfe3;border:2px dotted #111"></div>
<div class="a" style="left:406px;top:209px;width:134px;height:47px;background:#22221e"></div>
<div class="c" style="left:340px;top:233px;font-size:24px;font-weight:bold">A(X)</div>
<div class="c" style="left:475px;top:232px;font-size:24px;color:#fff">B(Y)</div>
<div class="a" style="left:274px;top:257px;width:265px;height:95px;background:#03033a"></div>
<div class="a" style="left:274px;top:352px;width:265px;height:300px;background:#000"></div>
<div class="a" style="left:274px;top:257px;width:265px;height:395px;background:repeating-linear-gradient(transparent 0,transparent 30.500px,#444 30.500px,#444 32px)"></div>
<div class="a" style="left:405px;top:257px;width:1.500px;height:395px;background:#444"></div>
<div class="a" style="left:273px;top:257px;width:2px;height:395px;background:#e8e8e0"></div>
<div class="a" style="left:274px;top:256px;width:265px;height:1.500px;background:#e8e8d0"></div>
<div class="a" style="left:538px;top:257px;width:3px;height:395px;background:#333"></div>
<div class="a" style="left:537px;top:256px;width:5px;height:5px;background:#222;border:1px solid #ddd"></div>

<div class="r" style="left:264px;top:270px;font-size:23.700px">Long Name</div>
<div class="r" style="left:264px;top:302px;font-size:23.500px">Units</div>
<div class="r" style="left:264px;top:334px;font-size:23.500px">Comments</div>
<div class="r" style="left:264px;top:366px;font-size:23.500px">1</div><div class="r" style="left:264px;top:398px;font-size:23.500px">2</div><div class="r" style="left:264px;top:430px;font-size:23.500px">3</div><div class="r" style="left:264px;top:462px;font-size:23.500px">4</div><div class="r" style="left:264px;top:494px;font-size:23.500px">5</div><div class="r" style="left:264px;top:526px;font-size:23.500px">6</div><div class="r" style="left:264px;top:558px;font-size:23.500px">7</div><div class="r" style="left:264px;top:590px;font-size:23.500px">8</div><div class="r" style="left:264px;top:622px;font-size:23.500px">9</div>
<div style="color:#fff;font-size:23px">
<div class="r" style="left:397px;top:366px">1</div><div class="r" style="left:397px;top:398px">2</div><div class="r" style="left:397px;top:430px">3</div><div class="r" style="left:397px;top:462px">4</div><div class="r" style="left:397px;top:494px">5</div><div class="r" style="left:397px;top:526px">6</div><div class="r" style="left:397px;top:558px">7</div><div class="r" style="left:397px;top:590px">8</div>
<div class="r" style="left:533px;top:366px">1E-3</div><div class="r" style="left:533px;top:398px">0.01</div><div class="r" style="left:533px;top:430px">0.1</div><div class="r" style="left:533px;top:462px">1</div><div class="r" style="left:533px;top:494px">10</div><div class="r" style="left:533px;top:526px">100</div><div class="r" style="left:533px;top:558px">1000</div><div class="r" style="left:533px;top:590px">10000</div>
</div>
<!-- sheet tabs -->
<div class="a" style="left:101px;top:1166px;width:947px;height:35px;background:#f6f8fb"></div>
<div class="a" style="left:101px;top:1166px;width:35px;height:34px;background:#f0f0f0;border:2px solid #9a9a9a"></div>
<div class="a" style="left:135px;top:1166px;width:35px;height:34px;background:#f0f0f0;border:2px solid #9a9a9a"></div>
<svg class="a" style="left:101px;top:1166px" width="80" height="34"><path d="M20 12L14 17L20 22ZM50 12L56 17L50 22Z" fill="#666"/><path d="M71 0L77 33" stroke="#000" stroke-width="1.500"/></svg>
<div class="t" style="left:180px;top:1184px;font:32px 'Liberation Serif',serif;line-height:1.15">Sheet1</div>

<!-- GRAPH1 -->
<div class="win" style="left:1067px;top:149px;width:1335px;height:1075px"></div>
<svg class="a" style="left:1081px;top:167px" width="33" height="34"><rect x="3" y="3" width="29" height="30" fill="#000"/><rect x="1" y="1" width="28" height="29" fill="#fff" stroke="#000"/><rect x="3" y="4" width="24" height="21" fill="#19f0f0" stroke="#e00000"/><path d="M3 13H27" stroke="#e00000"/><path d="M6 11L10 7L13 9L17 6L21 9L25 8" fill="none" stroke="#000"/><path d="M5 20C10 19 12 16 25 15" fill="none" stroke="#e000e0" stroke-width="1.500"/><path d="M5 24L12 21L25 20" fill="none" stroke="#000"/><path d="M3 27.500H27" stroke="#000" stroke-dasharray="3 2"/></svg>
<div class="t" style="left:1118px;top:186px;font-size:24px;color:#909497">Graph1</div>
<div class="wb" style="left:2180px;width:68px"></div><div class="wb" style="left:2250px;width:68px"></div><div class="wb" style="left:2320px;width:68px"></div>
<svg class="a" style="left:2180px;top:164px" width="208" height="40"><rect x="23" y="19" width="22" height="10" rx="1" fill="#d6d6d6" stroke="#777"/><rect x="92" y="8" width="22" height="24" rx="2" fill="#e4e4e4" stroke="#777"/><rect x="98" y="16" width="10" height="7" fill="none" stroke="#445"/><path d="M168 12L184 30M184 12L168 30" stroke="#777" stroke-width="8"/><path d="M168 12L184 30M184 12L168 30" stroke="#ebebeb" stroke-width="5.500"/></svg>
<div class="a" style="left:1080px;top:207px;width:1309px;height:926px;background:#fff;border-top:2px solid #7d8185;border-left:2px solid #7d8185"></div>
<div class="a" style="left:1080px;top:1133px;width:1309px;height:76px;background:#bdbdbd"></div>
<div class="a" style="left:1080px;top:1209px;width:1309px;height:2px;background:#f0f0f0"></div>
<div class="a" style="left:1082px;top:209px;width:38px;height:39px;background:#bdbdbd"></div>
<div class="c" style="left:1102px;top:230px;font-size:18px">1</div>
<svg class="a" style="left:1080px;top:207px;overflow:visible" width="1" height="1">
<defs><path id="dec" d="M0-25H8M0-39.600H8M0-50H8M0-58H8M0-64.600H8M0-70.100H8M0-75H8M0-79.200H8" stroke="#000" stroke-width="3"/></defs>
<g transform="translate(-1080 -207)">
<g transform="translate(1308 0)"><use href="#dec" y="403"/><use href="#dec" y="486"/><use href="#dec" y="569"/><use href="#dec" y="652"/><use href="#dec" y="735"/><use href="#dec" y="818"/><use href="#dec" y="901"/><use href="#dec" y="984"/></g>
<path d="M1316.500 316V980.500M1314 979H2208" stroke="#000" stroke-width="3" fill="none"/>
<path d="M1302 320H1316M1302 403H1316M1302 486H1316M1302 569H1316M1302 652H1316M1302 735H1316M1302 818H1316M1302 901H1316" stroke="#000" stroke-width="3"/>
<path d="M1316 979V993M1414 979V993M1513 979V993M1612 979V993M1711 979V993M1810 979V993M1909 979V993M2008 979V993M2107 979V993M2206 979V993" stroke="#000" stroke-width="3"/>
<path d="M1365 979V987M1464 979V987M1563 979V987M1662 979V987M1761 979V987M1860 979V987M1959 979V987M2058 979V987M2157 979V987" stroke="#000" stroke-width="3"/>
<g><rect x="1407" y="894" width="14" height="14"/><rect x="1506" y="811" width="14" height="14"/><rect x="1605" y="728" width="14" height="14"/><rect x="1704" y="645" width="14" height="14"/><rect x="1803" y="562" width="14" height="14"/><rect x="1902" y="479" width="14" height="14"/><rect x="2002" y="396" width="14" height="14"/><rect x="2101" y="314" width="14" height="14"/></g>
<rect x="2030" y="242" width="124" height="45" fill="#fff" stroke="#000" stroke-width="2"/><rect x="2073" y="259" width="13" height="14"/>
</g></svg>
<div class="c" style="left:2133px;top:266px;font-size:27px">B</div>
<div style="font-size:27px">
<div class="r" style="left:1293px;top:320px;letter-spacing:.2px">10000</div><div class="r" style="left:1293px;top:403px">1000</div><div class="r" style="left:1293px;top:486px">100</div><div class="r" style="left:1293px;top:569px">10</div><div class="r" style="left:1293px;top:651px">1</div><div class="r" style="left:1293px;top:734px">0.1</div><div class="r" style="left:1291px;top:817px">0.01</div><div class="r" style="left:1293px;top:900px">1E-3</div>
<div class="c" style="left:1315px;top:1013px">0</div><div class="c" style="left:1414px;top:1013px">1</div><div class="c" style="left:1513px;top:1013px">2</div><div class="c" style="left:1612px;top:1013px">3</div><div class="c" style="left:1711px;top:1013px">4</div><div class="c" style="left:1810px;top:1013px">5</div><div class="c" style="left:1909px;top:1013px">6</div><div class="c" style="left:2008px;top:1013px">7</div><div class="c" style="left:2107px;top:1013px">8</div><div class="c" style="left:2206px;top:1013px">9</div>
</div>
<div class="c" style="left:1760px;top:1066px;font-size:33px">A</div>
<div class="c" style="left:1180px;top:670px;font-size:33px;transform:translate(-50%,-50%) rotate(-90deg)">B</div>

<!-- DIALOG -->
<div class="a" style="left:227px;top:637px;width:911px;height:695px;background:#f0f0f0;border:3px solid #1a1a1a;box-shadow:5px 5px 14px rgba(0,0,0,.45)"></div>
<div class="a" style="left:230px;top:640px;width:905px;height:44px;background:#fff"></div>
<div class="t" style="left:231px;top:661.500px;font-size:24px;letter-spacing:.3px">Y Axis - Layer 1</div>
<div class="c" style="left:998px;top:660px;font-size:25px">?</div>
<svg class="a" style="left:1078px;top:649px" width="22" height="22"><path d="M1 1L21 21M21 1L1 21" stroke="#111" stroke-width="1.800"/></svg>

<div class="tab" style="left:246px;top:704px;width:234px;height:42px"></div>
<div class="tab" style="left:479px;top:704px;width:310px;height:42px"></div>
<div class="tab" style="left:788px;top:704px;width:328px;height:42px"></div>
<div class="tab" style="left:433px;top:745px;width:276px;height:42px"></div>
<div class="tab" style="left:708px;top:745px;width:226px;height:42px"></div>
<div class="tab" style="left:933px;top:745px;width:183px;height:42px"></div>
<div class="a" style="left:242px;top:786px;width:877px;height:458px;background:#fff;border:1.500px solid #d9d9d9"></div>
<div class="a" style="left:242px;top:742px;width:192px;height:46px;background:#fff;border:1.500px solid #d9d9d9;border-bottom:0"></div>
<div class="t" style="left:301px;top:727.500px;font-size:24px;letter-spacing:.2px">Tick Labels</div>
<div class="t" style="left:536px;top:727.500px;font-size:24px;letter-spacing:.7px">Minor Tick Labels</div>
<div class="t" style="left:845px;top:727.500px;font-size:24px;letter-spacing:.45px">Custom Tick Labels</div>
<div class="t" style="left:301.500px;top:764.500px;font-size:24px">Scale</div>
<div class="t" style="left:513px;top:768.500px;font-size:24px;letter-spacing:1px">Title &amp; Format</div>
<div class="t" style="left:765px;top:768.500px;font-size:24px;letter-spacing:.15px">Grid Lines</div>
<div class="t" style="left:991px;top:768.500px;font-size:24px">Break</div>

<div class="t" style="left:256px;top:816.500px;font-size:21px">Selection:</div>
<div class="a" style="left:256px;top:831px;width:122px;height:338px;background:#fff;border:1.500px solid #828790"></div>
<svg class="a" style="left:262px;top:834px" width="36" height="32"><path d="M4 3V13" stroke="#e00000" stroke-width="1.500"/><path d="M6 8H32" stroke="#e00000" stroke-width="2"/><path d="M11 4L5 8L11 12Z" fill="#e00000"/><rect x="4" y="16" width="28" height="16" fill="#bdbdbd"/><path d="M4 32V16H32" fill="none" stroke="#000" stroke-width="1.500"/><path d="M8 16V13M13 16V14M18 16V13M23 16V14M28 16V13" stroke="#000"/></svg>
<div class="a" style="left:258px;top:860px;width:118px;height:21px;overflow:hidden"><div class="a" style="left:4px;top:2px;font-size:21px;line-height:24px">Horizontal</div></div>
<div class="a" style="left:258px;top:881px;width:119px;height:48px;background:#3399ff;overflow:hidden"><div class="a" style="left:4px;top:30px;font-size:21px;line-height:24px;color:#fff">Vertical</div></div>
<svg class="a" style="left:259px;top:883px" width="35" height="30"><rect x="0" y="0" width="33" height="29" fill="#fff"/><path d="M4 2V27M28 2V27" stroke="#e00000" stroke-width="2"/><path d="M1 5L4 1L7 5ZM1 24L4 28L7 24ZM25 5L28 1L31 5ZM25 24L28 28L31 24Z" fill="#e00000"/><rect x="7" y="2" width="18" height="25" fill="#bdbdbd" stroke="#000"/><path d="M8 20L12 12L15 19L18 11L21 19L24 18" fill="none" stroke="#333"/></svg>

<div class="t" style="left:400.500px;top:847px;font-size:21px">From</div>
<div class="t" style="left:400.500px;top:903px;font-size:21px">To</div>
<div class="t" style="left:400.500px;top:963px;font-size:21px">Type</div>
<div class="t" style="left:400.500px;top:1034.500px;font-size:21px">Rescale</div>
<div class="inp" style="left:496px;top:824px;width:219px;height:44px"></div><div class="t" style="left:501px;top:841px;font-size:21px;letter-spacing:.3px">1.1E-4</div>
<div class="inp" style="left:496px;top:884px;width:219px;height:44px"></div><div class="t" style="left:501px;top:901px;font-size:21px;letter-spacing:.3px">11000</div>
<div class="a" style="left:736px;top:824px;width:2px;height:246px;background:#a5a5a5"></div>

<div class="t" style="left:783px;top:847px;font-size:21px">Increment</div>
<div class="t" style="left:783px;top:903.500px;font-size:21px;color:#6d6d6d;letter-spacing:.5px">#&nbsp;Major Ticks</div>
<div class="t" style="left:787px;top:969.500px;font-size:21px;letter-spacing:.4px">#&nbsp;Minor Ticks</div>
<div class="t" style="left:787px;top:1031.500px;font-size:21px;letter-spacing:.3px">First Tick</div>
<svg class="a" style="left:750px;top:832px" width="28" height="84"><circle cx="14" cy="14" r="11.500" fill="#fff" stroke="#333" stroke-width="2"/><circle cx="14" cy="14" r="7" fill="#333"/><circle cx="14" cy="70" r="11.500" fill="#fff" stroke="#ccc" stroke-width="2"/></svg>
<div class="inp" style="left:931px;top:825px;width:132px;height:43px"></div><div class="t" style="left:937px;top:840.500px;font-size:21px">1</div>
<div class="inp" style="left:931px;top:881px;width:132px;height:44px;background:#f4f4f4;border-color:#ccc"></div><div class="t" style="left:936px;top:897.500px;font-size:21px;color:#6d6d6d">7</div>
<div class="inp" style="left:931px;top:943px;width:132px;height:44px"></div><div class="t" style="left:936px;top:959px;font-size:21px">8</div>
<div class="inp" style="left:931px;top:1006px;width:132px;height:44px"></div>

<!-- ticks group -->
<div class="a" style="left:400px;top:1099px;width:669px;height:134px;border:1.500px solid #dcdcdc"></div>
<div class="t" style="left:410px;top:1100px;font-size:21px;background:#fff;padding:0 0 0 0">Ticks Location</div>
<div class="a" style="left:418px;top:1130px;width:26px;height:26px;border:2px solid #333;background:#fff"></div><div class="t" style="left:450px;top:1143.500px;font-size:21px">Major</div>
<div class="a" style="left:418px;top:1176px;width:26px;height:26px;border:2px solid #333;background:#fff"></div><div class="t" style="left:450px;top:1189.500px;font-size:21px">Minor</div>
<div class="a" style="left:718px;top:1125px;width:330px;height:32px;border:1.500px solid #d6d6d6;background:#fff"></div>
<div class="a" style="left:718px;top:1175px;width:330px;height:32px;border:1.500px solid #d6d6d6;background:#fff"></div>
<svg class="a" style="left:1024px;top:1135px" width="16" height="62"><path d="M2 6L8 11L14 6M2 55L8 60L14 55" fill="none" stroke="#999" stroke-width="1.300"/></svg>

<!-- buttons -->
<div class="a" style="left:600px;top:1262px;width:143px;height:50px;background:#e1e1e1;border:2px solid #0078d7"></div>
<div class="a" style="left:759px;top:1262px;width:173px;height:50px;background:#e1e1e1;border:1.500px solid #adadad"></div>
<div class="c" style="left:845px;top:1288px;font-size:24px">Cancel</div>
<div class="a" style="left:948px;top:1262px;width:173px;height:50px;background:#cbcbcb;border:1.500px solid #bdbdbd"></div>
<div class="c" style="left:1034px;top:1288px;font-size:24px;color:#838383">Apply</div>

<!-- type combo -->
<div class="a" style="left:496px;top:947px;width:219px;height:50px;background:#fff;border:2px solid #0078d7"></div>
<div class="a" style="left:681px;top:949px;width:32px;height:46px;background:#cce4f7;border-left:1.500px solid #0078d7"></div>
<svg class="a" style="left:689px;top:965px" width="18" height="12"><path d="M2 2L9 9L16 2" fill="none" stroke="#333" stroke-width="1.300"/></svg>
<div class="t" style="left:549.500px;top:971.500px;font-size:21px">Log10</div>
<svg class="a" style="left:0;top:0;overflow:visible" width="1" height="1">
<defs>
<g id="chip"><path d="M-9-13H12V10H-9Z" fill="#bdbdbd"/><path d="M-9 10V-13H12" fill="none" stroke="#000" stroke-width="2"/><path d="M-14-9H-9M-14-5H-9M-14-1H-9M-14 3H-9M-14 7H-9M-3 10V17M5 10V17M-6 17H8" stroke="#000" stroke-width="1.800" fill="none"/><path d="M1 6H6M6 3L12 0" stroke="#000" stroke-width="1.800"/></g>
</defs>
<use href="#chip" x="519" y="971"/><text x="527" y="969" font-family="Liberation Serif" font-weight="bold" font-size="14" text-anchor="middle">10</text>
</svg>

<!-- dropdown -->
<div class="a" style="left:496px;top:996px;width:219px;height:441px;background:#fff;border:1.500px solid #0078d7;box-shadow:3px 3px 5px rgba(0,0,0,.45);overflow:hidden">
<div class="a" style="left:1px;top:44.500px;width:215px;height:43px;background:#3399ff;border:1px dotted #c9811f"></div>
<svg class="a" style="left:-1.500px;top:-1.500px" width="219" height="441">
<g font-family="Liberation Serif" font-weight="bold" font-size="18" text-anchor="middle">
<use href="#chip" x="20" y="23"/>
<rect x="3" y="46" width="29" height="32" fill="#fff"/><rect x="9" y="50" width="22" height="11" fill="#bdbdbd" stroke="#000"/><path d="M5 52H9M5 55H9M5 58H9M11 61V65M15 61V65M19 61V65M23 61V65M27 61V65" stroke="#000"/><path d="M18 59L30 52" stroke="#000"/><text x="14" y="58" font-size="9">10</text>
<use href="#chip" x="20" y="108"/><path d="M15 121V125M18 121V125M21 121V125M24 121V125" stroke="#000" stroke-width="1.500"/>
<use href="#chip" x="20" y="154"/><text x="19" y="157">P</text>
<use href="#chip" x="20" y="198"/><text x="18" y="203">T</text><path d="M12 189H24" stroke="#000" stroke-width="2"/>
<use href="#chip" x="20" y="242"/><text x="21" y="247" font-size="14">T+</text>
<use href="#chip" x="20" y="286"/><text x="17" y="288">L</text>
<use href="#chip" x="20" y="330"/><text x="19" y="332">e</text>
<use href="#chip" x="20" y="374"/><text x="18" y="376">2</text>
<use href="#chip" x="20" y="418"/><text x="27" y="422" font-size="14">V</text>
</g></svg>
<div class="it" style="top:23px">Linear</div>
<div class="it" style="top:67px;color:#fff">Log10</div>
<div class="it" style="top:111px">Probability</div>
<div class="it" style="top:155px">Probit</div>
<div class="it" style="top:199px">Reciprocal</div>
<div class="it" style="top:243px">Offset Reciprocal</div>
<div class="it" style="top:287px">Logit</div>
<div class="it" style="top:331px">ln</div>
<div class="it" style="top:375px">Log2</div>
<div class="it" style="top:419px">Double Log Reciprocal</div>
</div>
<svg class="a" style="left:714px;top:1403px" width="20" height="30"><path d="M1 12H3M1 16H3M1 20H3" stroke="#333" stroke-width="2"/><path d="M5 12H7M5 16H7M5 20H7" stroke="#e00000" stroke-width="2"/><path d="M9 12H11M9 16H11M9 20H11" stroke="#333" stroke-width="2"/><path d="M15 4V25M12 7L15 3L18 7M12 22L15 26L18 22" fill="none" stroke="#222" stroke-width="1.300"/></svg>

<!-- annotations -->
<div class="a" style="left:1204px;top:294px;width:147px;height:760px;border:6px solid #ff4040"></div>
<div class="a" style="left:392px;top:937px;width:345px;height:171px;border:6px solid #ff4040"></div>
<div class="t" style="left:1399px;top:333px;font-size:36px;font-weight:bold;color:#ff4040;letter-spacing:-.3px">1.双击Y轴。</div>
<div class="t" style="left:733px;top:1134px;font-size:40px;color:#ff4040;-webkit-text-stroke:.8px #ff4040">2.Type栏选择Log 10.</div>
</body></html>
